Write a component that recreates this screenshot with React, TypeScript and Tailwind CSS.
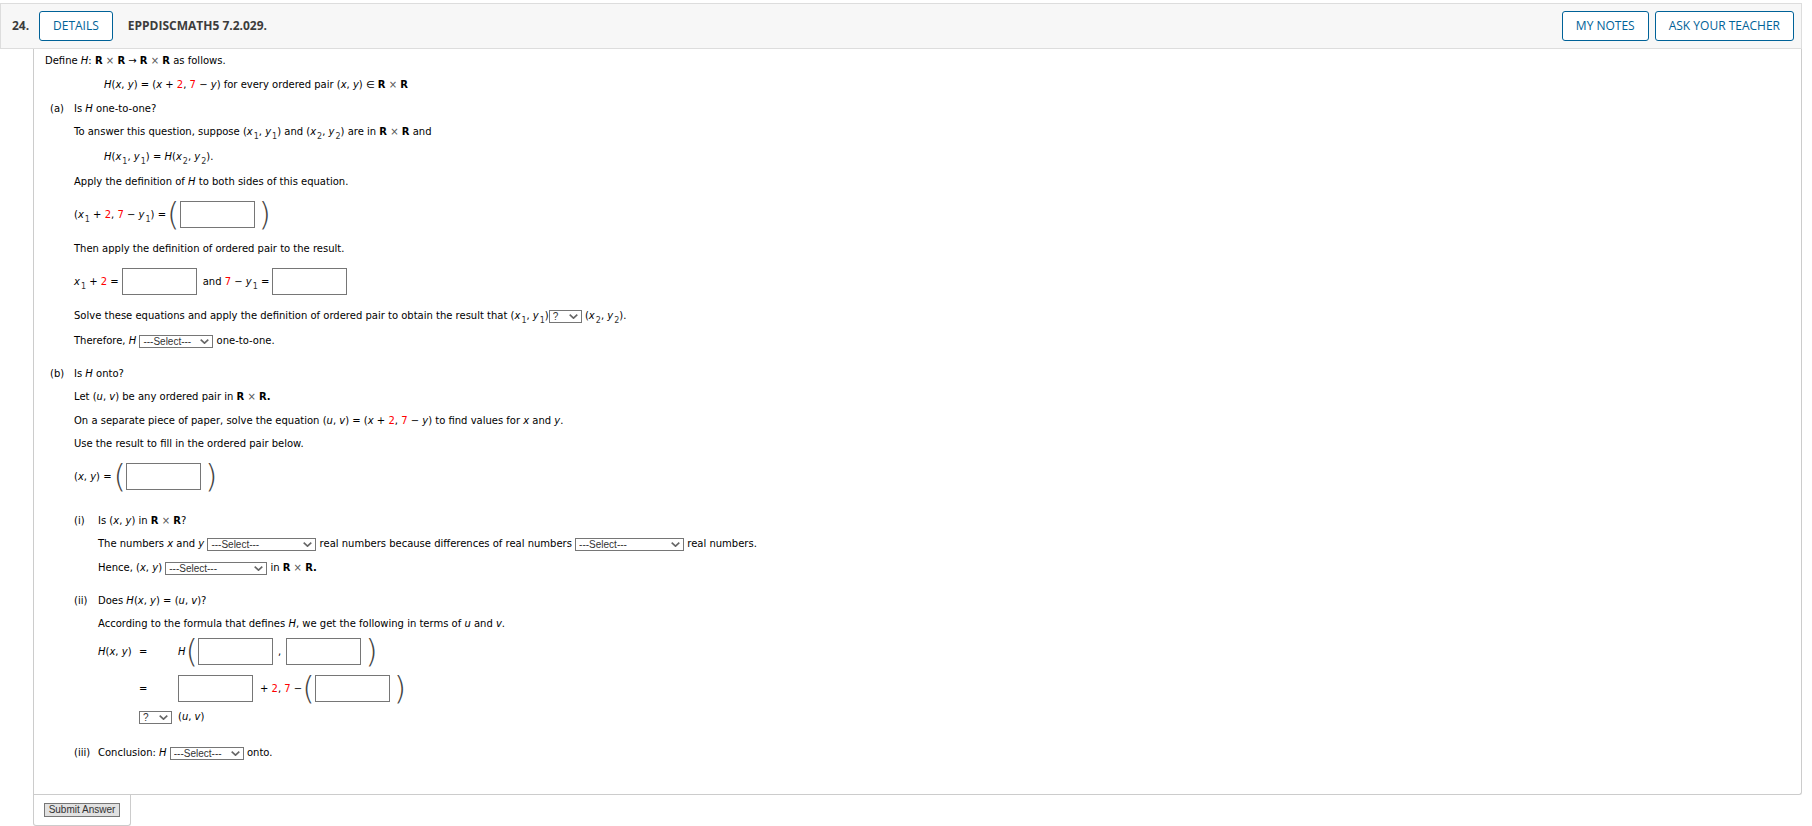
import type { ReactNode } from 'react'
import clsx from 'clsx'

function Red({ children }: { children: ReactNode }) {
  return <span className="text-[#ff0000]">{children}</span>
}

function Sub({ children }: { children: ReactNode }) {
  return <sub className="-bottom-1 pl-px text-[8px] text-[#333]">{children}</sub>
}

function RxR({ end }: { end?: string }) {
  return (
    <>
      <b>R</b> <span className="text-[#555]">×</span> <b>R{end}</b>
    </>
  )
}

// (x1, y1) or (x2, y2)
function Pair({ n }: { n: number }) {
  return (
    <>
      (<i>x</i>
      <Sub>{n}</Sub>, <i>y</i>
      <Sub>{n}</Sub>)
    </>
  )
}

function Answer({ label }: { label: string }) {
  return (
    <input
      type="text"
      aria-label={label}
      className="h-[27px] w-[75px] shrink-0 border border-[#767676] bg-white px-1"
    />
  )
}

function Paren({ children, right }: { children: string; right?: boolean }) {
  return (
    <span
      className={clsx(
        'font-["DejaVu_Sans"] text-[32px] leading-[27px] font-extralight text-[#444]',
        right && 'pl-1',
      )}
    >
      {children}
    </span>
  )
}

function Choice({
  label,
  width,
  options,
  placeholder = '---Select---',
}: {
  label: string
  width: string
  options: string[]
  placeholder?: string
}) {
  return (
    <span className="relative inline-block h-[13px] align-middle">
      <select
        aria-label={label}
        className={clsx(
          'block h-[13px] appearance-none border border-[#767676] bg-white pl-[3px] font-["Liberation_Sans",sans-serif] text-[10px] leading-[11px] text-[#333]',
          width,
        )}
      >
        <option>{placeholder}</option>
        {options.map((o) => (
          <option key={o}>{o}</option>
        ))}
      </select>
      <svg
        viewBox="0 0 9 5"
        className="pointer-events-none absolute top-1 right-1 h-[5px] w-[9px]"
        fill="none"
        stroke="#666"
        strokeWidth="1.6"
      >
        <path d="M0.7 0.6 4.5 4.2 8.3 0.6" />
      </svg>
    </span>
  )
}

function HeaderButton({ children }: { children: ReactNode }) {
  return (
    <button
      type="button"
      className="h-[30px] rounded-[3px] border border-[#006298] bg-white px-[13px] text-[12px] text-[#006298]"
    >
      {children}
    </button>
  )
}

function PartA() {
  return (
    <li className="mt-2 flex pl-[5px]">
      <span className="w-6 shrink-0">(a)</span>
      <div className="flex-1">
        <p>
          Is <i>H</i> one-to-one?
        </p>
        <p className="mt-[7px]">
          To answer this question, suppose <Pair n={1} /> and <Pair n={2} /> are in <RxR /> and
        </p>
        <p className="mt-[9px] pl-[30px]">
          <i>H</i>
          <Pair n={1} /> = <i>H</i>
          <Pair n={2} />.
        </p>
        <p className="mt-[9px]">
          Apply the definition of <i>H</i> to both sides of this equation.
        </p>
        <div className="mt-[11px] flex items-center">
          <span className="pr-px">
            (<i>x</i>
            <Sub>1</Sub> + <Red>2</Red>, <Red>7</Red> − <i>y</i>
            <Sub>1</Sub>) =
          </span>
          <Paren>(</Paren>
          <Answer label="Right-hand ordered pair" />
          <Paren right>)</Paren>
        </div>
        <p className="mt-[13px]">Then apply the definition of ordered pair to the result.</p>
        <div className="mt-[11px] flex items-center">
          <span className="pr-[3px]">
            <i>x</i>
            <Sub>1</Sub> + <Red>2</Red> =
          </span>
          <Answer label="x1 + 2" />
          <span className="pr-[3px] pl-[6px]">
            and <Red>7</Red> − <i>y</i>
            <Sub>1</Sub> =
          </span>
          <Answer label="7 - y1" />
        </div>
        <p className="mt-[13px]">
          Solve these equations and apply the definition of ordered pair to obtain the result that{' '}
          <Pair n={1} />
          <Choice label="Relation" width="w-[33px]" placeholder="?" options={['=', '≠']} />{' '}
          <Pair n={2} />.
        </p>
        <p className="mt-[9px]">
          Therefore, <i>H</i>{' '}
          <Choice label="Is H one-to-one" width="w-[74px]" options={['is', 'is not']} /> one-to-one.
        </p>
      </div>
    </li>
  )
}

function PartB() {
  return (
    <li className="mt-[17px] flex pl-[5px]">
      <span className="w-6 shrink-0">(b)</span>
      <div className="flex-1">
        <p>
          Is <i>H</i> onto?
        </p>
        <p className="mt-[7px]">
          Let (<i>u</i>, <i>v</i>) be any ordered pair in <RxR end="." />
        </p>
        <p className="mt-2">
          On a separate piece of paper, solve the equation (<i>u</i>, <i>v</i>) = (<i>x</i> +{' '}
          <Red>2</Red>, <Red>7</Red> − <i>y</i>) to find values for <i>x</i> and <i>y</i>.
        </p>
        <p className="mt-[7px]">Use the result to fill in the ordered pair below.</p>
        <div className="mt-[11px] flex items-center">
          <span className="pr-[2px]">
            (<i>x</i>, <i>y</i>) =
          </span>
          <Paren>(</Paren>
          <Answer label="(x, y)" />
          <Paren right>)</Paren>
        </div>

        <ol>
          <li className="mt-[23px] flex">
            <span className="w-6 shrink-0">(i)</span>
            <div>
              <p>
                Is (<i>x</i>, <i>y</i>) in <RxR />?
              </p>
              <p className="mt-[7px]">
                The numbers <i>x</i> and <i>y</i>{' '}
                <Choice label="x and y" width="w-[109px]" options={['are', 'are not']} /> real
                numbers because differences of real numbers{' '}
                <Choice label="Differences" width="w-[109px]" options={['are', 'are not']} /> real
                numbers.
              </p>
              <p className="mt-2">
                Hence, (<i>x</i>, <i>y</i>){' '}
                <Choice label="(x, y)" width="w-[102px]" options={['is', 'is not']} /> in{' '}
                <RxR end="." />
              </p>
            </div>
          </li>

          <li className="mt-[17px] flex">
            <span className="w-6 shrink-0">(ii)</span>
            <div>
              <p>
                Does <i>H</i>(<i>x</i>, <i>y</i>) = (<i>u</i>, <i>v</i>)?
              </p>
              <p className="mt-[7px]">
                According to the formula that defines <i>H</i>, we get the following in terms of{' '}
                <i>u</i> and <i>v</i>.
              </p>
              <div className="mt-[6px] grid grid-cols-[41px_39px_auto] items-center">
                <span>
                  <i>H</i>(<i>x</i>, <i>y</i>)
                </span>
                <span>=</span>
                <div className="flex items-center">
                  <i>H</i>
                  <Paren>(</Paren>
                  <Answer label="First argument of H" />
                  <span className="px-[5px]">,</span>
                  <Answer label="Second argument of H" />
                  <Paren right>)</Paren>
                </div>
              </div>
              <div className="mt-[10px] grid grid-cols-[41px_39px_auto] items-center">
                <span />
                <span>=</span>
                <div className="flex items-center">
                  <Answer label="First term" />
                  <span className="pl-[7px]">
                    + <Red>2</Red>, <Red>7</Red> −
                  </span>
                  <Paren>(</Paren>
                  <Answer label="Second term" />
                  <Paren right>)</Paren>
                </div>
              </div>
              <div className="mt-[7px] grid grid-cols-[41px_39px_auto] items-center">
                <span />
                <span>
                  <Choice label="Relation to (u, v)" width="w-[33px]" placeholder="?" options={['=', '≠']} />
                </span>
                <span>
                  (<i>u</i>, <i>v</i>)
                </span>
              </div>
            </div>
          </li>

          <li className="mt-5 flex">
            <span className="w-6 shrink-0">(iii)</span>
            <p>
              Conclusion: <i>H</i>{' '}
              <Choice label="Is H onto" width="w-[74px]" options={['is', 'is not']} /> onto.
            </p>
          </li>
        </ol>
      </div>
    </li>
  )
}

export default function App() {
  return (
    <main className="mr-[10px] bg-white pt-[3px]">
      <header className='flex h-[46px] items-center border border-[#ddd] bg-[#f7f7f7] pr-[7px] pl-[11px] font-["Open_Sans",sans-serif] text-[12px] text-[#3c3c3c]'>
        <span className="w-[27px] font-bold">24.</span>
        <HeaderButton>DETAILS</HeaderButton>
        <h1 className="ml-[15px] font-bold">EPPDISCMATH5 7.2.029.</h1>
        <div className="ml-auto flex gap-[6px]">
          <HeaderButton>MY NOTES</HeaderButton>
          <HeaderButton>ASK YOUR TEACHER</HeaderButton>
        </div>
      </header>

      <form
        className='ml-[33px] font-["DejaVu_Sans",sans-serif] text-[10px] leading-4 text-black'
        onSubmit={(e) => e.preventDefault()}
      >
        <div className="rounded-br-[3px] border border-t-0 border-[#ccc] pt-1 pb-[33px] pl-[11px]">
          <p>
            Define <i>H</i>: <RxR /> → <RxR /> as follows.
          </p>
          <p className="mt-2 pl-[59px]">
            <i>H</i>(<i>x</i>, <i>y</i>) = (<i>x</i> + <Red>2</Red>, <Red>7</Red> − <i>y</i>) for
            every ordered pair (<i>x</i>, <i>y</i>) ∈ <RxR />
          </p>
          <ol>
            <PartA />
            <PartB />
          </ol>
        </div>
        <div className="w-[98px] rounded-b-[3px] border border-t-0 border-[#ccc] py-2 pl-[10px]">
          <button
            type="submit"
            className='block h-[14px] w-[76px] border border-[#767676] bg-[#e1e1e1] text-center font-["Liberation_Sans",sans-serif] text-[10px] leading-3 whitespace-nowrap text-[#333]'
          >
            Submit Answer
          </button>
        </div>
      </form>
    </main>
  )
}
